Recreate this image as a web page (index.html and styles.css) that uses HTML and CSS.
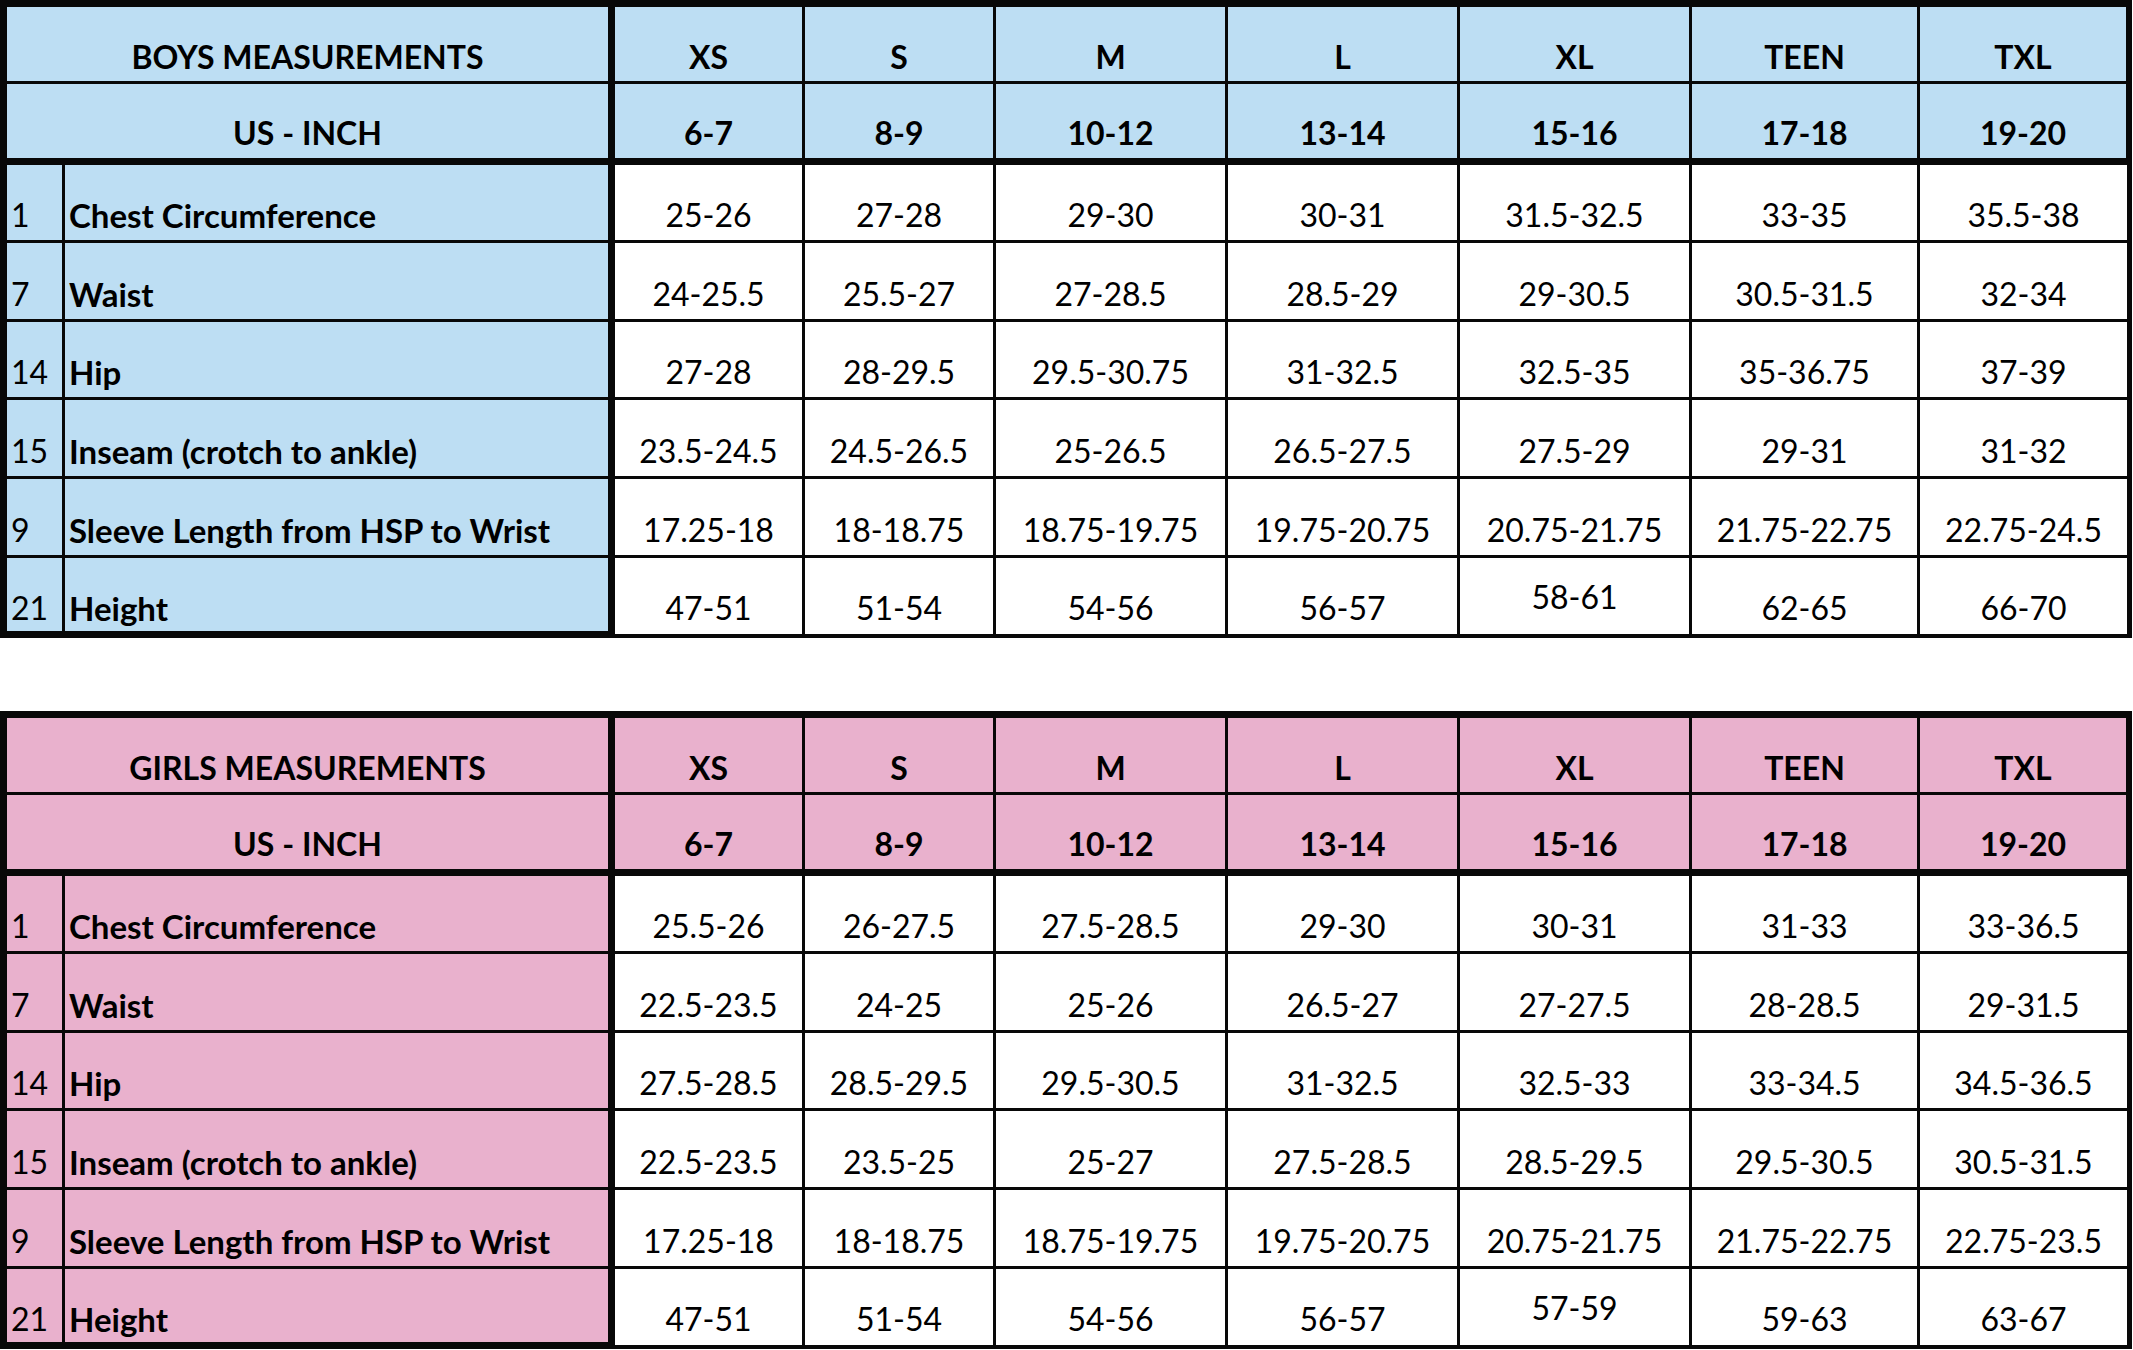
FILE: index.html
```html
<!DOCTYPE html>
<html>
<head>
<meta charset="utf-8">
<link rel="stylesheet" href="styles.css">
</head>
<body>
<div class="page">
  <section class="chart boys">
    <div class="row h1">
      <div class="c title b">BOYS MEASUREMENTS</div>
      <div class="c hs">XS</div><div class="c hs">S</div><div class="c hs">M</div><div class="c hs">L</div><div class="c hs">XL</div><div class="c hs">TEEN</div><div class="c hs last">TXL</div>
    </div>
    <div class="row h2">
      <div class="c title">US - INCH</div>
      <div class="c hs">6-7</div><div class="c hs">8-9</div><div class="c hs">10-12</div><div class="c hs">13-14</div><div class="c hs">15-16</div><div class="c hs">17-18</div><div class="c hs last">19-20</div>
    </div>
    <div class="row r1">
      <div class="c num">1</div><div class="c lab">Chest Circumference</div>
      <div class="c d">25-26</div><div class="c d">27-28</div><div class="c d">29-30</div><div class="c d">30-31</div><div class="c d">31.5-32.5</div><div class="c d">33-35</div><div class="c d last">35.5-38</div>
    </div>
    <div class="row r2">
      <div class="c num">7</div><div class="c lab">Waist</div>
      <div class="c d">24-25.5</div><div class="c d">25.5-27</div><div class="c d">27-28.5</div><div class="c d">28.5-29</div><div class="c d">29-30.5</div><div class="c d">30.5-31.5</div><div class="c d last">32-34</div>
    </div>
    <div class="row r3">
      <div class="c num">14</div><div class="c lab">Hip</div>
      <div class="c d">27-28</div><div class="c d">28-29.5</div><div class="c d">29.5-30.75</div><div class="c d">31-32.5</div><div class="c d">32.5-35</div><div class="c d">35-36.75</div><div class="c d last">37-39</div>
    </div>
    <div class="row r4">
      <div class="c num">15</div><div class="c lab">Inseam (crotch to ankle)</div>
      <div class="c d">23.5-24.5</div><div class="c d">24.5-26.5</div><div class="c d">25-26.5</div><div class="c d">26.5-27.5</div><div class="c d">27.5-29</div><div class="c d">29-31</div><div class="c d last">31-32</div>
    </div>
    <div class="row r5">
      <div class="c num">9</div><div class="c lab">Sleeve Length from HSP to Wrist</div>
      <div class="c d">17.25-18</div><div class="c d">18-18.75</div><div class="c d">18.75-19.75</div><div class="c d">19.75-20.75</div><div class="c d">20.75-21.75</div><div class="c d">21.75-22.75</div><div class="c d last">22.75-24.5</div>
    </div>
    <div class="row r6 end">
      <div class="c num">21</div><div class="c lab">Height</div>
      <div class="c d">47-51</div><div class="c d">51-54</div><div class="c d">54-56</div><div class="c d">56-57</div><div class="c d raised">58-61</div><div class="c d">62-65</div><div class="c d last">66-70</div>
    </div>
  </section>

  <section class="chart girls">
    <div class="row h1">
      <div class="c title b">GIRLS MEASUREMENTS</div>
      <div class="c hs">XS</div><div class="c hs">S</div><div class="c hs">M</div><div class="c hs">L</div><div class="c hs">XL</div><div class="c hs">TEEN</div><div class="c hs last">TXL</div>
    </div>
    <div class="row h2">
      <div class="c title">US - INCH</div>
      <div class="c hs">6-7</div><div class="c hs">8-9</div><div class="c hs">10-12</div><div class="c hs">13-14</div><div class="c hs">15-16</div><div class="c hs">17-18</div><div class="c hs last">19-20</div>
    </div>
    <div class="row r1">
      <div class="c num">1</div><div class="c lab">Chest Circumference</div>
      <div class="c d">25.5-26</div><div class="c d">26-27.5</div><div class="c d">27.5-28.5</div><div class="c d">29-30</div><div class="c d">30-31</div><div class="c d">31-33</div><div class="c d last">33-36.5</div>
    </div>
    <div class="row r2">
      <div class="c num">7</div><div class="c lab">Waist</div>
      <div class="c d">22.5-23.5</div><div class="c d">24-25</div><div class="c d">25-26</div><div class="c d">26.5-27</div><div class="c d">27-27.5</div><div class="c d">28-28.5</div><div class="c d last">29-31.5</div>
    </div>
    <div class="row r3">
      <div class="c num">14</div><div class="c lab">Hip</div>
      <div class="c d">27.5-28.5</div><div class="c d">28.5-29.5</div><div class="c d">29.5-30.5</div><div class="c d">31-32.5</div><div class="c d">32.5-33</div><div class="c d">33-34.5</div><div class="c d last">34.5-36.5</div>
    </div>
    <div class="row r4">
      <div class="c num">15</div><div class="c lab">Inseam (crotch to ankle)</div>
      <div class="c d">22.5-23.5</div><div class="c d">23.5-25</div><div class="c d">25-27</div><div class="c d">27.5-28.5</div><div class="c d">28.5-29.5</div><div class="c d">29.5-30.5</div><div class="c d last">30.5-31.5</div>
    </div>
    <div class="row r5">
      <div class="c num">9</div><div class="c lab">Sleeve Length from HSP to Wrist</div>
      <div class="c d">17.25-18</div><div class="c d">18-18.75</div><div class="c d">18.75-19.75</div><div class="c d">19.75-20.75</div><div class="c d">20.75-21.75</div><div class="c d">21.75-22.75</div><div class="c d last">22.75-23.5</div>
    </div>
    <div class="row r6 end">
      <div class="c num">21</div><div class="c lab">Height</div>
      <div class="c d">47-51</div><div class="c d">51-54</div><div class="c d">54-56</div><div class="c d">56-57</div><div class="c d raised">57-59</div><div class="c d">59-63</div><div class="c d last">63-67</div>
    </div>
  </section>
</div>
</body>
</html>
```

FILE: styles.css
```css
* { box-sizing: border-box; }

html, body {
  margin: 0;
  padding: 0;
  background: #ffffff;
}

body {
  font-family: Lato, "Liberation Sans", sans-serif;
  font-size: 32px;
  color: #000000;
}

.page {
  display: flex;
  flex-direction: column;
  gap: 73px;
  width: 2133px;
}

.chart {
  width: 2132px;
  border-top: 7px solid #080808;
  border-left: 7px solid #080808;
  display: flex;
  flex-direction: column;
}

.boys { --fill: #bddef3; }
.girls { --fill: #e9b1cd; }

.row {
  display: grid;
  grid-template-columns: 58px 550px 190px 191px 232px 232px 232px 228px 212px;
}

.row.h1 { height: 77px; }
.row.h2 { height: 81px; }
.row.r1 { height: 78px; }
.row.r2 { height: 79px; }
.row.r3 { height: 78px; }
.row.r4 { height: 79px; }
.row.r5 { height: 79px; }
.row.r6 { height: 80px; }

.c {
  display: flex;
  align-items: flex-end;
  justify-content: center;
  line-height: 38px;
  padding-bottom: 6px;
  border-right: 3px solid #080808;
  border-bottom: 3px solid #080808;
  white-space: nowrap;
  background: #ffffff;
}

.title {
  grid-column: span 2;
  background: var(--fill);
  font-weight: 700;
  border-right-width: 7px;
  padding-bottom: 5px;
}

.hs {
  background: var(--fill);
  font-weight: 700;
  padding-bottom: 5px;
}

.h2 .c { border-bottom-width: 7px; padding-bottom: 6px; }

.num {
  background: var(--fill);
  justify-content: flex-start;
  padding-left: 4px;
}

.lab {
  background: var(--fill);
  justify-content: flex-start;
  font-weight: 700;
  font-size: 33px;
  padding-left: 4px;
  border-right-width: 7px;
}

.last { border-right-width: 5px; }
.hs.last { border-right-width: 6px; }

.end .num, .end .lab { border-bottom-width: 7px; padding-bottom: 4px; }
.end .d { border-bottom-width: 4px; padding-bottom: 7px; }
.end .d.raised { padding-bottom: 18px; }
```
